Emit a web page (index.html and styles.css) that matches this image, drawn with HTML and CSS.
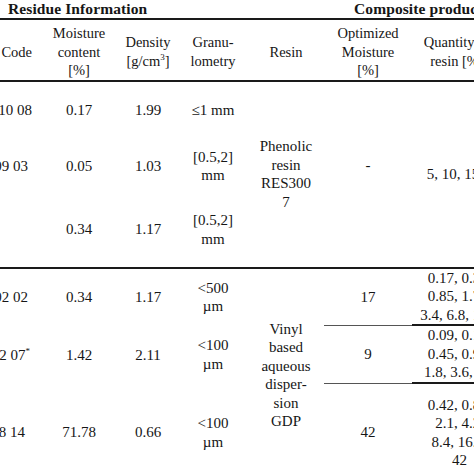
FILE: index.html
```html
<!DOCTYPE html>
<html lang="en">
<head>
<meta charset="utf-8">
<title>Residue and composite table</title>
<link rel="stylesheet" href="styles.css">
</head>
<body>
<div class="frame">
<table class="tbl">
  <colgroup>
    <col class="c-code"><col class="c-moist"><col class="c-dens"><col class="c-gran"><col class="c-resin"><col class="c-opt"><col class="c-qty">
  </colgroup>
  <tr class="r-group">
    <th colspan="4" class="grp grp-res">Residue Information</th>
    <th colspan="3" class="grp grp-comp">Composite production</th>
  </tr>
  <tr class="r-head">
    <th class="hd code">Code</th>
    <th class="hd">Moisture<br>content<br>[%]</th>
    <th class="hd">Density<br>[g/cm<sup>3</sup>]</th>
    <th class="hd">Granu-<br>lometry</th>
    <th class="hd">Resin</th>
    <th class="hd">Optimized<br>Moisture<br>[%]</th>
    <th class="hd">Quantity of<br>resin [%]</th>
  </tr>
  <tr class="r1">
    <td class="code">10 10 08</td>
    <td>0.17</td>
    <td>1.99</td>
    <td>&le;1 mm</td>
    <td rowspan="3" class="rule">Phenolic<br>resin<br>RES300<br>7</td>
    <td rowspan="3" class="rule dash">-</td>
    <td rowspan="3" class="rule qty qty-one">5, 10, 15</td>
  </tr>
  <tr class="r2">
    <td class="code code-b">19 09 03</td>
    <td>0.05</td>
    <td>1.03</td>
    <td>[0.5,2]<br>mm</td>
  </tr>
  <tr class="r3">
    <td class="code rule"></td>
    <td class="rule">0.34</td>
    <td class="rule">1.17</td>
    <td class="rule">[0.5,2]<br>mm</td>
  </tr>
  <tr class="r5">
    <td class="code code-b">03 02 02</td>
    <td>0.34</td>
    <td>1.17</td>
    <td>&lt;500<br>&micro;m</td>
    <td rowspan="3">Vinyl<br>based<br>aqueous<br>disper-<br>sion<br>GDP</td>
    <td class="thin">17</td>
    <td class="thick qty">0.17, 0.34,<br>0.85, 1.70,<br>3.4, 6.8, 13.6</td>
  </tr>
  <tr class="r6">
    <td class="code code-c">10 12 07<sup>*</sup></td>
    <td>1.42</td>
    <td>2.11</td>
    <td>&lt;100<br>&micro;m</td>
    <td class="thin">9</td>
    <td class="thick qty">0.09, 0.18,<br>0.45, 0.90,<br>1.8, 3.6, 7.2</td>
  </tr>
  <tr class="r7">
    <td class="code code-d">02 08 14</td>
    <td>71.78</td>
    <td>0.66</td>
    <td>&lt;100<br>&micro;m</td>
    <td>42</td>
    <td class="qty">0.42, 0.84,<br>2.1, 4.2,<br>8.4, 16.8,<br>42</td>
  </tr>
</table>
</div>
</body>
</html>
```

FILE: styles.css
```css
html, body {
  margin: 0;
  padding: 0;
  background: #ffffff;
}

.frame {
  width: 474px;
  height: 474px;
  overflow: hidden;
}

.tbl {
  margin-left: -40px;
  width: 542px;
  table-layout: fixed;
  border-collapse: separate;
  border-spacing: 0;
  font-family: "Liberation Serif", "Times New Roman", serif;
  font-size: 15px;
  line-height: 18.5px;
  color: #161616;
}

.c-code { width: 80px; }
.c-moist { width: 78px; }
.c-dens { width: 60px; }
.c-gran { width: 70px; }
.c-resin { width: 76px; }
.c-opt { width: 88px; }
.c-qty { width: 90px; }

.tbl td, .tbl th {
  padding: 0;
  text-align: center;
  vertical-align: middle;
  white-space: nowrap;
  font-weight: normal;
}

.r-group { height: 20px; }
.r-head { height: 59px; }
.r1 { height: 58px; }
.r2 { height: 53px; }
.r3 { height: 76px; }
.r5 { height: 57px; }
.r6 { height: 57px; }
.r7 { height: 98px; }

.tbl .grp {
  font-weight: bold;
  font-size: 15.5px;
  letter-spacing: 0.1px;
  text-align: left;
  border-bottom: 2px solid #1a1a1a;
  vertical-align: top;
  line-height: 17px;
}

.tbl .grp-res { padding-left: 48px; }
.tbl .grp-comp { padding-left: 106px; }

.tbl .hd {
  font-size: 14.5px;
  padding-top: 4px;
  border-bottom: 2px solid #1a1a1a;
}

.tbl .code {
  text-align: right;
  padding-right: 8px;
}

.tbl .code-b { padding-right: 12px; }
.tbl .code-c { padding-right: 10px; }
.tbl .code-d { padding-right: 15px; }

.tbl .rule { border-bottom: 2px solid #1a1a1a; }

.tbl .thin { border-bottom: 1px solid #555555; }
.tbl .thick { border-bottom: 2px solid #1a1a1a; }

.tbl .qty { padding-left: 5px; }
.tbl .qty-one { padding-left: 0; padding-right: 8px; }

.tbl .dash { padding-bottom: 18px; }

sup {
  font-size: 9px;
  line-height: 0;
  vertical-align: 6px;
}
```
